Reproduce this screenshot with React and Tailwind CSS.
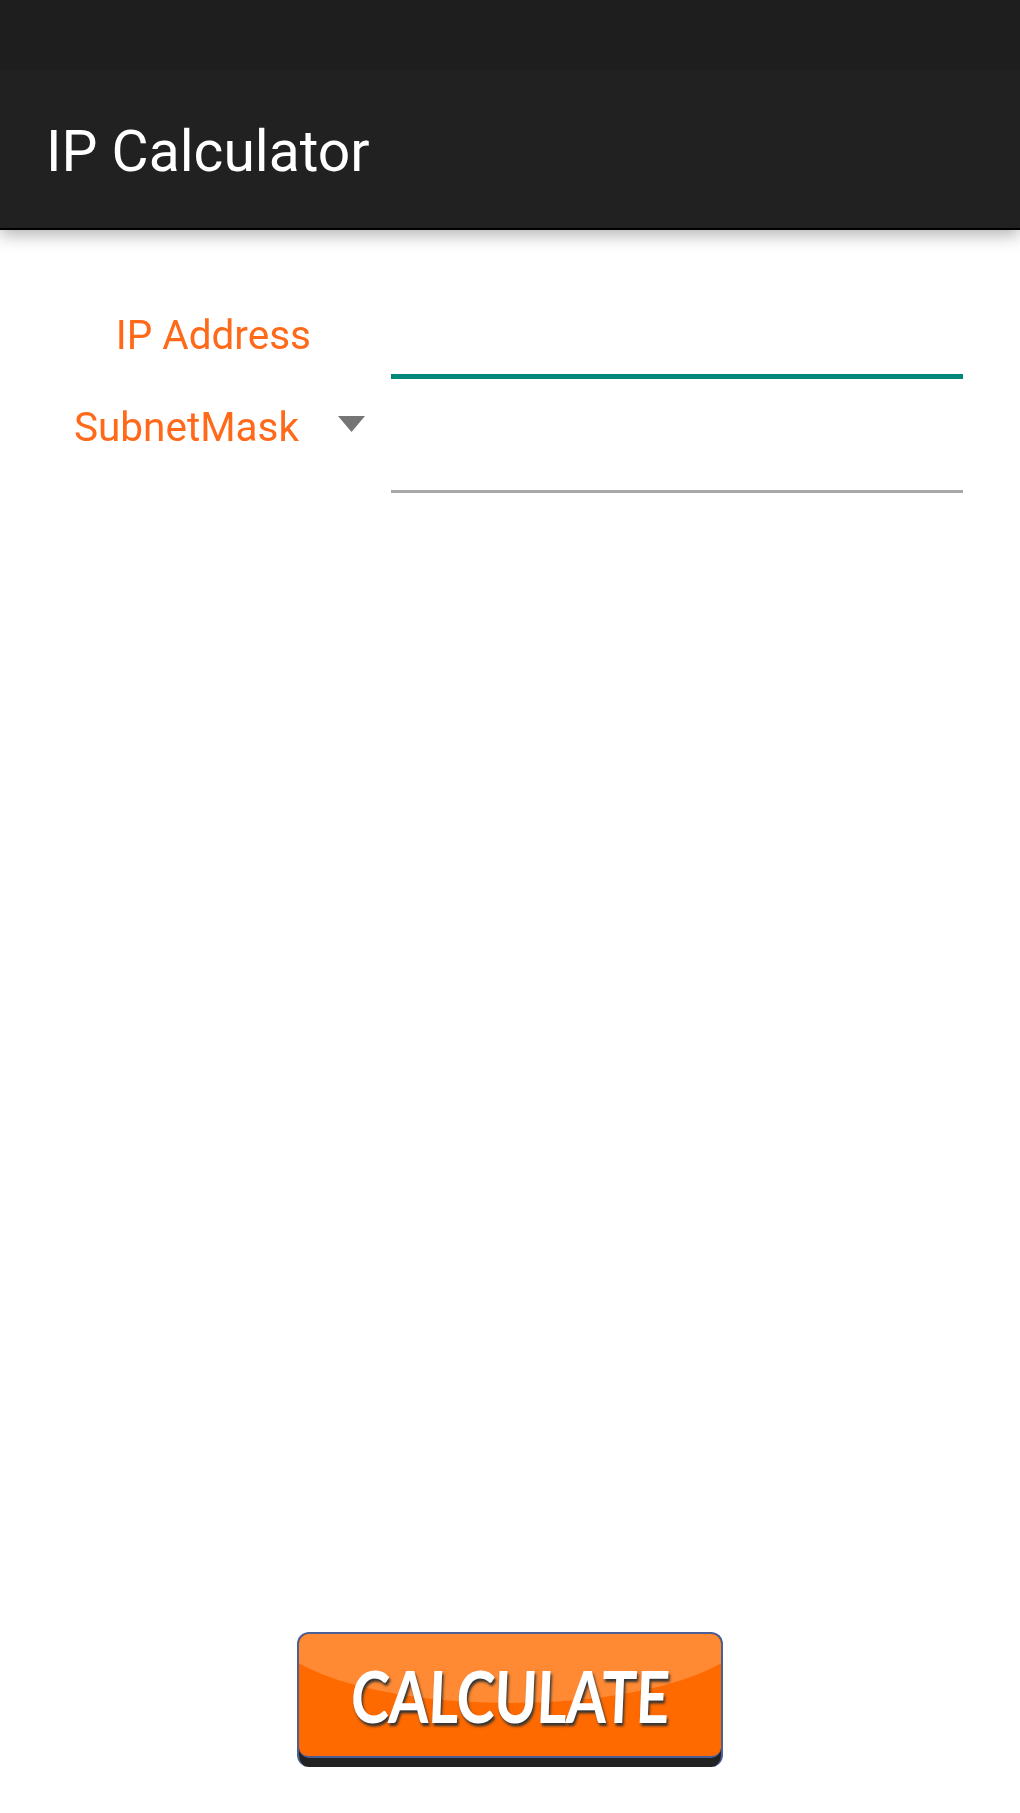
function Triangle() {
  return (
    <svg width="27" height="16" viewBox="0 0 27 16" className="mt-[9px] ml-[39px] shrink-0 blur-[0.4px]">
      <path d="M0 0H27L13.5 16Z" fill="#757575" />
    </svg>
  )
}

function CalculateButton() {
  return (
    <button className="relative w-[426px] h-[135px] rounded-[12px] bg-[#222222] border-t-2 border-x-2 border-[#4a5f96] overflow-hidden blur-[0.6px]">
      <div className="absolute inset-x-0 top-0 bottom-[9px] rounded-b-[10px] border-b-2 border-[#4a5f96] bg-[#ff6a00] overflow-hidden">
        <div className="absolute left-[-30px] right-[-30px] top-[-85px] h-[154px] rounded-[50%] bg-[#ff8a33]" />
      </div>
      <span className="absolute inset-x-0 top-[26px] text-center text-white text-[72px] leading-[70px] font-bold tracking-[-1px] [font-family:Lato,sans-serif] scale-x-[0.81] -skew-x-3 [text-shadow:2px_3px_3px_#333333]">
        CALCULATE
      </span>
    </button>
  )
}

export default function App() {
  return (
    <div className="h-[1813px] flex flex-col bg-white overflow-hidden [font-family:Roboto,sans-serif]">
      <header className="relative z-10 h-[230px] shrink-0 bg-[#212121] border-b-2 border-black shadow-[0_5px_16px_rgba(0,0,0,0.3)]">
        <div className="h-[70px] bg-[#1e1e1e]" />
        <h1 className="pl-[46px] pt-[52px] text-white text-[57px] leading-[60px] blur-[0.4px]">IP Calculator</h1>
      </header>

      <main className="flex-1 flex flex-col">
        <div className="flex h-[149px] shrink-0">
          <label className="w-[391px] shrink-0 pt-[85px] pr-[80px] text-right text-[#ff6a1a] text-[40.5px] leading-[40px] blur-[0.4px]">IP Address</label>
          <div className="w-[572px] border-b-[5px] border-[#00897b] blur-[0.4px]" />
        </div>
        <div className="flex h-[114px] shrink-0">
          <div className="w-[391px] shrink-0 pl-[74px] pt-[28px] flex items-start text-[#ff6a1a] text-[40.5px] leading-[40px]">
            <span className="blur-[0.4px]">SubnetMask</span>
            <Triangle />
          </div>
          <div className="w-[572px] border-b-[3px] border-[#a8a8a8] blur-[0.4px]" />
        </div>

        <div className="mt-auto mb-[46px] flex justify-center">
          <CalculateButton />
        </div>
      </main>
    </div>
  )
}
